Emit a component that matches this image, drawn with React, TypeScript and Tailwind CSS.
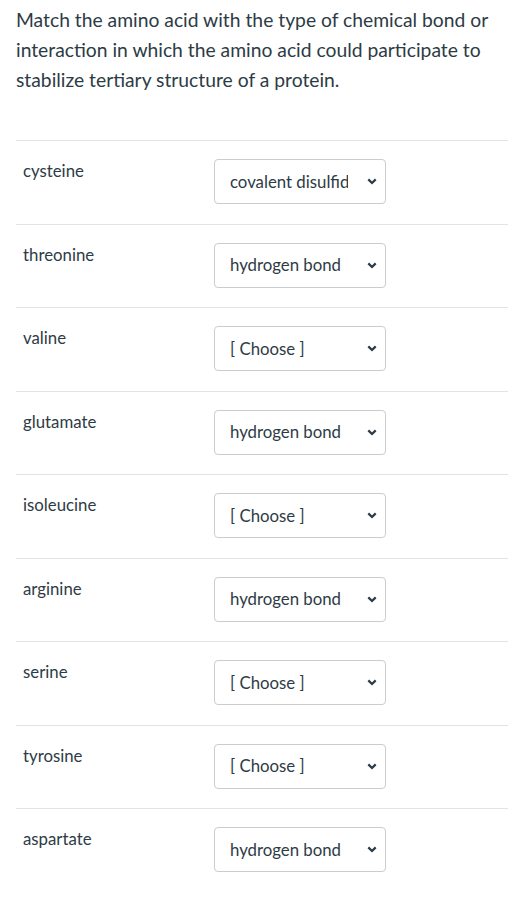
import React from 'react';

type Row = { acid: string; answer: string };

const rows: Row[] = [
  { acid: 'cysteine', answer: 'covalent disulfide' },
  { acid: 'threonine', answer: 'hydrogen bond' },
  { acid: 'valine', answer: '[ Choose ]' },
  { acid: 'glutamate', answer: 'hydrogen bond' },
  { acid: 'isoleucine', answer: '[ Choose ]' },
  { acid: 'arginine', answer: 'hydrogen bond' },
  { acid: 'serine', answer: '[ Choose ]' },
  { acid: 'tyrosine', answer: '[ Choose ]' },
  { acid: 'aspartate', answer: 'hydrogen bond' },
];

const Chevron = () => (
  <svg width="10" height="7" viewBox="0 0 10 7" className="shrink-0">
    <path d="M1.3 1.4 L5 5 L8.7 1.4" fill="none" stroke="#2d3b45" strokeWidth="2.3" />
  </svg>
);

const FakeSelect: React.FC<{ value: string }> = ({ value }) => (
  <div className="w-[172px] h-[45px] flex items-center border border-[#c7cdd1] rounded-[4px] bg-white pl-[15px] pr-[8px]">
    <div className="flex-1 overflow-hidden whitespace-nowrap text-[16.8px] text-[#2d3b45] mr-[19px]">{value}</div>
    <Chevron />
  </div>
);

export default function App() {
  return (
    <div className="w-[516px] min-h-[900px] bg-white text-[#2d3b45]" style={{ fontFamily: 'Lato, "Noto Sans", sans-serif' }}>
      {/* Question text */}
      <div className="px-4 pt-[5px] text-[19.3px] leading-[30px]">
        Match the amino acid with the type of chemical bond or interaction in which the amino acid could participate to
        stabilize tertiary structure of a protein.
      </div>

      {/* Answer rows */}
      <div className="mt-[45px] ml-4 w-[492px]">
        {rows.map((row) => (
          <div key={row.acid} className="flex border-t border-[#e1e4e6] pt-[18px] pb-[19.5px]">
            <div className="w-[198px] pl-[7px] text-[16.8px] leading-[24px]">{row.acid}</div>
            <FakeSelect value={row.answer} />
          </div>
        ))}
      </div>
    </div>
  );
}
